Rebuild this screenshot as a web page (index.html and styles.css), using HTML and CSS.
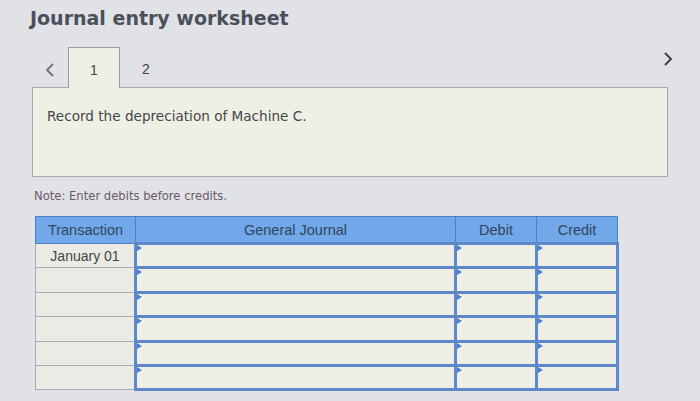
FILE: index.html
```html
<!DOCTYPE html>
<html lang="en">
<head>
<meta charset="utf-8">
<title>Journal entry worksheet</title>
<link rel="stylesheet" href="styles.css">
</head>
<body>
<div class="page">
  <h1 class="title">Journal entry worksheet</h1>
  <div class="tabs">
    <span class="nav prev"><svg width="12" height="16" viewBox="0 0 12 16"><path d="M9 2 L3 8 L9 14" fill="none" stroke="#6a6f80" stroke-width="1.8"/></svg></span>
    <span class="tab active">1</span>
    <span class="tab">2</span>
    <span class="spacer"></span>
    <span class="nav next"><svg width="12" height="16" viewBox="0 0 12 16"><path d="M3 2 L9 8 L3 14" fill="none" stroke="#3f4250" stroke-width="2"/></svg></span>
  </div>
  <div class="question">Record the depreciation of Machine C.</div>
  <p class="note">Note: Enter debits before credits.</p>
  <table class="journal">
    <colgroup>
      <col class="c-tr"><col class="c-gj"><col class="c-dr"><col class="c-cr">
    </colgroup>
    <thead>
      <tr>
        <th>Transaction</th>
        <th>General Journal</th>
        <th>Debit</th>
        <th>Credit</th>
      </tr>
    </thead>
    <tbody>
      <tr><td class="tr">January 01</td><td class="inp"></td><td class="inp"></td><td class="inp"></td></tr>
      <tr><td class="tr"></td><td class="inp"></td><td class="inp"></td><td class="inp"></td></tr>
      <tr><td class="tr"></td><td class="inp"></td><td class="inp"></td><td class="inp"></td></tr>
      <tr><td class="tr"></td><td class="inp"></td><td class="inp"></td><td class="inp"></td></tr>
      <tr><td class="tr"></td><td class="inp"></td><td class="inp"></td><td class="inp"></td></tr>
      <tr><td class="tr"></td><td class="inp"></td><td class="inp"></td><td class="inp"></td></tr>
    </tbody>
  </table>
</div>
</body>
</html>
```
FILE: styles.css
```css
html, body {
  margin: 0;
  padding: 0;
  background: #e0e2e6;
}
body {
  width: 700px;
  height: 401px;
  overflow: hidden;
}
.page {
  padding: 4px 0 0 0;
}
.title {
  margin: 0 0 0 30px;
  font: bold 19px/28px "DejaVu Sans", Verdana, sans-serif;
  color: #4a4f5b;
}
.tabs {
  display: flex;
  align-items: stretch;
  height: 40px;
  margin: 15px 0 0 32px;
  width: 646px;
}
.nav {
  display: flex;
  align-items: center;
  justify-content: center;
}
.prev {
  width: 36px;
  padding-top: 6px;
}
.next {
  width: 20px;
  align-items: flex-start;
  padding-top: 4px;
}
.spacer { flex: 1; }
.tab {
  width: 52px;
  display: flex;
  align-items: center;
  justify-content: center;
  padding-top: 4px;
  box-sizing: border-box;
  font: 14px "Liberation Sans", Arial, sans-serif;
  color: #444;
}
.tab.active {
  background: #eeefe5;
  border: 1px solid #9a9ca0;
  border-bottom: none;
  margin-bottom: -1px;
  position: relative;
  z-index: 1;
}
.question {
  margin-left: 32px;
  width: 636px;
  height: 90px;
  box-sizing: border-box;
  background: #eeefe5;
  border: 1px solid #a9abae;
  padding: 19px 0 0 14px;
  font: 13.6px/18px "DejaVu Sans", Verdana, sans-serif;
  color: #464646;
}
.note {
  margin: 11px 0 0 34px;
  font: 11.6px/16px "DejaVu Sans", Verdana, sans-serif;
  color: #6b5a6a;
}
.journal {
  margin: 12px 0 0 35px;
  border-collapse: collapse;
  table-layout: fixed;
  width: 582px;
}
.c-tr { width: 100px; }
.c-gj { width: 320px; }
.c-dr { width: 81px; }
.c-cr { width: 81px; }
.journal th {
  background: #70a8e9;
  border: 1px solid #4f80c4;
  height: 25px;
  padding: 0;
  font: normal 14.5px "Liberation Sans", Arial, sans-serif;
  color: #33445c;
  text-align: center;
  vertical-align: middle;
}
.journal td {
  height: 21.4px;
  padding: 0;
  font: 14px "Liberation Sans", Arial, sans-serif;
  color: #454545;
}
.journal td.tr {
  background: #ebebe5;
  border: 1px solid #a9adb3;
  text-align: center;
}
.journal td.inp {
  background: #eeeee7;
  border: 3px solid #5d89c9;
  position: relative;
}
.journal td.inp::before {
  content: "";
  position: absolute;
  left: 0;
  top: 0;
  border-left: 5px solid #4a80d2;
  border-top: 3px solid transparent;
  border-bottom: 3px solid transparent;
}
```
